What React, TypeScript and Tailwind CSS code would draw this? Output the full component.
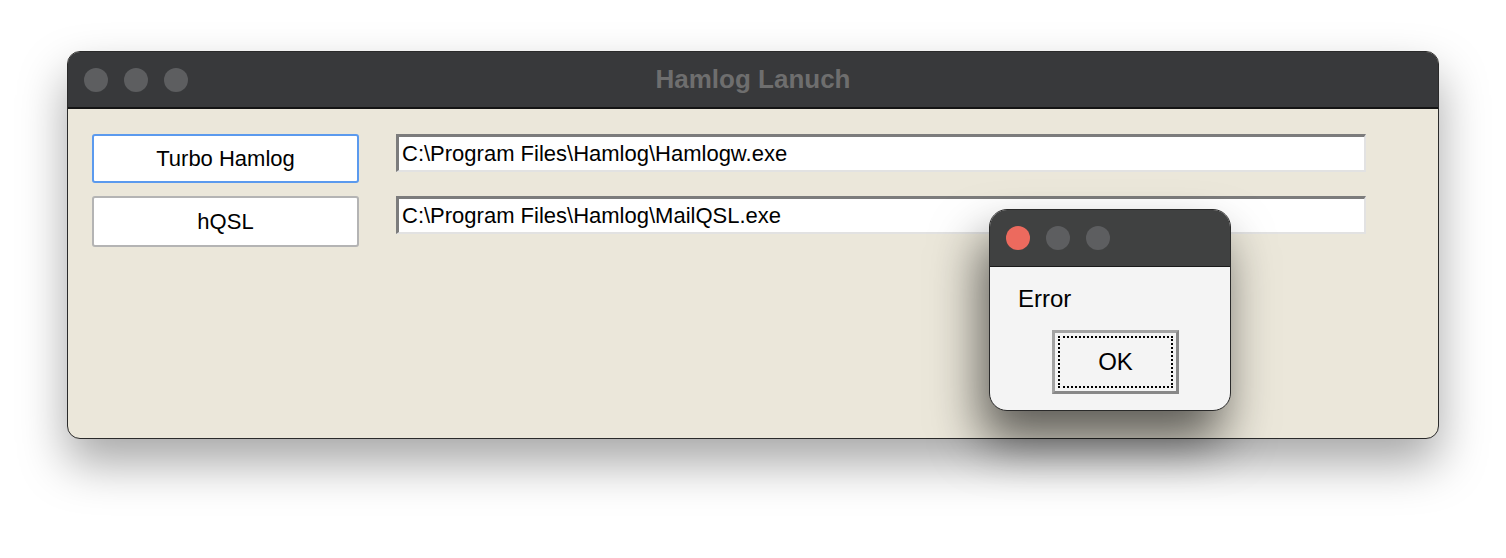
import React from "react";

function Dots({ red }: { red?: boolean }) {
  return (
    <div className="flex items-center gap-4">
      <div className={`w-6 h-6 rounded-full ${red ? "bg-[#ec6a5e]" : "bg-[#5d5e60]"}`} />
      <div className="w-6 h-6 rounded-full bg-[#5d5e60]" />
      <div className="w-6 h-6 rounded-full bg-[#5d5e60]" />
    </div>
  );
}

function PathField({ value }: { value: string }) {
  return (
    <div className="w-[970px] h-[38px] bg-white border-t-[3px] border-l-[3px] border-b-[2px] border-r-[2px] border-t-[#7c7c7c] border-l-[#7c7c7c] border-b-[#e2e2e2] border-r-[#e2e2e2] flex items-center pl-[3px] text-[22px] text-black leading-none">
      {value}
    </div>
  );
}

export default function App() {
  return (
    <div
      className="w-full h-[558px] bg-white overflow-hidden pt-[51px] pl-[67px]"
      style={{ fontFamily: '"Liberation Sans", Arial, sans-serif' }}
    >
      <div className="relative w-[1372px] h-[388px] rounded-[13px] border border-[#2a2a2a] bg-[#ebe7da] shadow-[0_24px_48px_rgba(0,0,0,0.35)] flex flex-col">
        <div className="relative h-[57px] shrink-0 rounded-t-[12px] bg-[#38393b] border-b-2 border-[#141414] flex items-center pl-4">
          <Dots />
          <div className="absolute inset-0 flex items-center justify-center text-[26px] font-bold text-[#6e6e6e] pointer-events-none">
            Hamlog Lanuch
          </div>
        </div>
        <div className="flex flex-col gap-[13px] pt-[25px] pl-[24px]">
          <div className="flex items-start gap-[37px]">
            <button className="w-[267px] h-[49px] bg-white rounded-[3px] border-2 border-[#5b9aee] text-[22px] text-black flex items-center justify-center">
              Turbo Hamlog
            </button>
            <PathField value="C:\Program Files\Hamlog\Hamlogw.exe" />
          </div>
          <div className="flex items-start gap-[37px]">
            <button className="w-[267px] h-[51px] bg-white rounded-[3px] border-2 border-[#b4b4b4] text-[22px] text-black flex items-center justify-center">
              hQSL
            </button>
            <PathField value="C:\Program Files\Hamlog\MailQSL.exe" />
          </div>
        </div>

        <div className="absolute left-[921px] top-[157px] w-[242px] h-[202px] rounded-[18px] border border-[#2a2a2a] bg-[#f4f4f4] shadow-[-8px_30px_50px_rgba(0,0,0,0.6)] flex flex-col overflow-hidden">
          <div className="h-[57px] shrink-0 bg-[#404141] border-b border-[#1a1a1a] flex items-center pl-4">
            <Dots red />
          </div>
          <div className="pl-[28px] pt-[20px] text-[24px] text-black leading-none">Error</div>
          <div className="flex mt-[19px] pl-[62px]">
            <div className="w-[127px] h-[64px] border-[3px] border-t-[#a3a3a3] border-l-[#a3a3a3] border-b-[#888888] border-r-[#888888] bg-[#f4f4f4] p-[3px]">
              <div className="w-full h-full border-2 border-dotted border-black flex items-center justify-center text-[24px] text-black">
                OK
              </div>
            </div>
          </div>
        </div>
      </div>
    </div>
  );
}
